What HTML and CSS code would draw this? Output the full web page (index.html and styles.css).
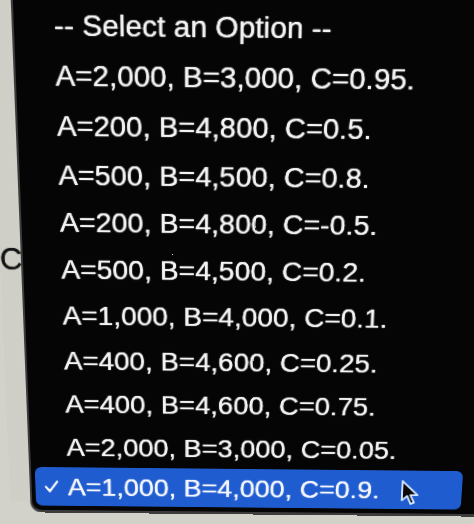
FILE: index.html
```html
<!DOCTYPE html>
<html lang="en">
<head>
<meta charset="utf-8">
<title>Select</title>
<link rel="stylesheet" href="styles.css">
</head>
<body>
<div class="stage">
  <div class="side"><span class="c">C</span></div>
  <div class="menu">
    <div class="opt"><span class="check"></span><span class="label">-- Select an Option --</span></div>
    <div class="opt"><span class="check"></span><span class="label">A=2,000, B=3,000, C=0.95.</span></div>
    <div class="opt"><span class="check"></span><span class="label">A=200, B=4,800, C=0.5.</span></div>
    <div class="opt"><span class="check"></span><span class="label">A=500, B=4,500, C=0.8.</span></div>
    <div class="opt"><span class="check"></span><span class="label">A=200, B=4,800, C=-0.5.</span></div>
    <div class="opt"><span class="check"></span><span class="label">A=500, B=4,500, C=0.2.</span></div>
    <div class="opt"><span class="check"></span><span class="label">A=1,000, B=4,000, C=0.1.</span></div>
    <div class="opt"><span class="check"></span><span class="label">A=400, B=4,600, C=0.25.</span></div>
    <div class="opt"><span class="check"></span><span class="label">A=400, B=4,600, C=0.75.</span></div>
    <div class="opt"><span class="check"></span><span class="label">A=2,000, B=3,000, C=0.05.</span></div>
    <div class="opt selected"><span class="check"><svg class="tick" width="16" height="16" viewBox="0 0 16 16"><path d="M2 8.5 L6 13.5 L14 2.5" fill="none" stroke="#f5f7ff" stroke-width="2.4" stroke-linecap="round" stroke-linejoin="round"/></svg></span><span class="label">A=1,000, B=4,000, C=0.9.</span>
      <svg class="cursor" width="22" height="30" viewBox="0 0 22 30">
        <path d="M2 2 L2 24 L7.5 19 L11.5 28 L15 26.5 L11 18 L18.5 18 Z" fill="#0a0a0a" stroke="#cfe3ff" stroke-width="2" stroke-linejoin="round"/>
      </svg>
    </div>
  </div>
</div>
</body>
</html>
```

FILE: styles.css
```css
html, body {
  margin: 0;
  padding: 0;
  width: 474px;
  height: 524px;
  overflow: hidden;
  background: #d2d2cb;
}

.stage {
  display: flex;
  align-items: flex-start;
  width: 474px;
  height: 524px;
  transform: perspective(1000px) rotateX(-13deg) rotate(0.6deg);
  background: linear-gradient(90deg, #cfcfc8, #dadad3);
}

.side {
  flex: none;
  width: 21px;
  overflow: hidden;
}

.c {
  display: block;
  margin-top: 246px;
  margin-left: 0;
  font-family: "Liberation Sans", Arial, sans-serif;
  font-size: 31px;
  line-height: 32px;
  color: #141414;
  text-shadow: 0 0 1px #141414;
}

.menu {
  flex: none;
  width: 470px;
  height: 524px;
  padding-top: 9.7px;
  background: #050505;
  border-left: 2px solid #3c3c3c;
  border-bottom: 3px solid #3c3c3c;
  border-bottom-left-radius: 12px;
  font-family: "Liberation Sans", Arial, sans-serif;
  font-size: 28.4px;
  color: #f3f3f3;
  text-shadow: 0 0 0.7px #ffffff, 0 0 1.5px rgba(255, 255, 255, 0.35);
}

.opt {
  display: flex;
  align-items: center;
  height: 47.7px;
  line-height: 47.7px;
  margin: 0 16px 0 4px;
  white-space: nowrap;
}

.check {
  flex: none;
  display: flex;
  align-items: center;
  width: 34px;
  box-sizing: border-box;
  padding-left: 9px;
}

.tick {
  display: block;
}

.selected {
  position: relative;
  height: 44px;
  line-height: 44px;
  margin-top: -2px;
  background: #1f5cd0;
  border-radius: 7px;
  color: #f5f7ff;
}

.cursor {
  position: absolute;
  left: 385px;
  top: 10px;
}
```
